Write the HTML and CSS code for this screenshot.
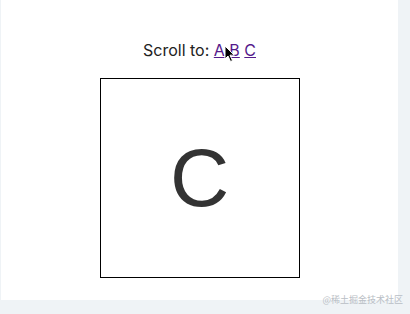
FILE: index.html
```html
<!DOCTYPE html>
<html>
<head>
<meta charset="utf-8">
<link rel="stylesheet" href="styles.css">
</head>
<body>
<div class="page">
  <div class="panel">
    <div class="nav">Scroll to: <a href="#a">A</a> <a href="#b">B</a> <a href="#c">C</a></div>
    <div class="box"><span class="letter">C</span></div>
    <svg class="cursor" width="12" height="18" viewBox="0 0 12 18"><path d="M1 1 L1 14 L4 11 L6.5 16.5 L8.5 15.6 L6 10.2 L10.3 10.2 Z" fill="#000" stroke="#fff" stroke-width="1"/></svg>
  </div>
  <div class="mark">@稀土掘金技术社区</div>
</div>
</body>
</html>
```
FILE: styles.css
```css
html, body { margin: 0; padding: 0; }
body { background: #eff3f6; width: 410px; height: 314px; overflow: hidden; }
.page { position: relative; width: 410px; height: 314px; }
.panel {
  position: relative;
  margin-left: 1px;
  width: 397px;
  height: 300px;
  background: #fff;
  display: flex;
  flex-direction: column;
  align-items: center;
  box-sizing: border-box;
  padding-top: 39px;
}
.nav {
  font-family: Inter, "Liberation Sans", sans-serif;
  font-size: 16px;
  line-height: 22px;
  color: #222;
}
.nav a { color: #551a8b; text-decoration: underline; }
.box {
  margin-top: 17px;
  width: 200px;
  height: 200px;
  border: 1px solid #000;
  box-sizing: border-box;
  display: flex;
  align-items: center;
  justify-content: center;
}
.letter {
  font-family: "Liberation Sans", Arial, sans-serif;
  font-size: 82px;
  color: #333;
  line-height: 1;
}
.cursor { position: absolute; left: 223px; top: 45px; }
.mark {
  position: absolute;
  right: 7px;
  top: 294px;
  font-family: "Noto Sans CJK SC", sans-serif;
  font-size: 9px;
  color: #b9bec5;
  line-height: 12px;
}
```
